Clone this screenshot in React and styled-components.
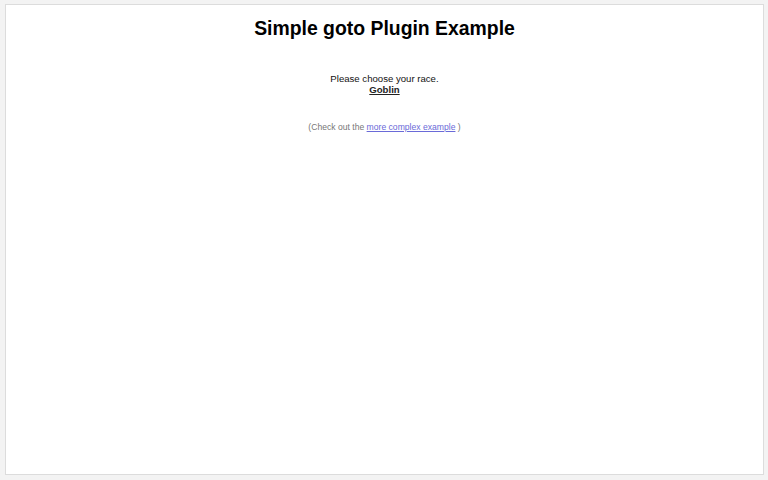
import styled, { createGlobalStyle } from "styled-components";

const GlobalStyle = createGlobalStyle`
html, body {
  margin: 0;
  padding: 0;
  background: #f3f3f3;
}
body {
  font-family: "Liberation Sans", Arial, sans-serif;
}
`;

const Page = styled.div`
width : 768px;
height : 480px;
padding : 4px 4px 5px 5px;
box-sizing : border-box;
display : flex;
`;

const Panel = styled.div`
flex : 1;
background : #fff;
border : 1px solid #dcdcdc;
display : flex;
flex-direction : column;
align-items : center;
`;

const Title = styled.h1`
margin : 14px 0 0 0;
font-size : 19.4px;
font-weight : bold;
color : #000;
line-height : 19px;
`;

const Story = styled.div`
margin-top : 36px;
display : flex;
flex-direction : column;
align-items : center;
font-size : 9.6px;
line-height : 10.5px;
color : #111;
`;

const Choice = styled.a`
font-weight : bold;
color : #222;
text-decoration : underline;
cursor : pointer;
`;

const Note = styled.p`
margin : 27px 0 0 0;
font-size : 8.6px;
color : #777;
`;

const NoteLink = styled.a`
color : #6a6ad8;
text-decoration : underline;
`;

const App = () => {
    return (
        <>
            <GlobalStyle />
            <Page>
                <Panel>
                    <Title>Simple goto Plugin Example</Title>
                    <Story>
                        <span>Please choose your race.</span>
                        <Choice>Goblin</Choice>
                    </Story>
                    <Note>
                        (Check out the <NoteLink href="#">more complex example</NoteLink> )
                    </Note>
                </Panel>
            </Page>
        </>
    )
}

export default App;
